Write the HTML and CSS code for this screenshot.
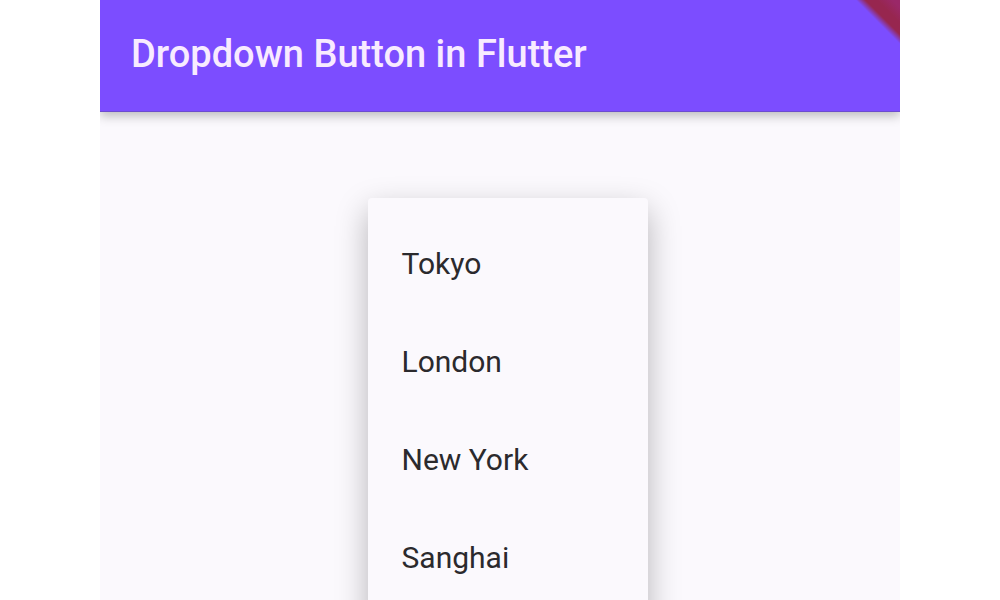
FILE: index.html
```
<!DOCTYPE html>
<html lang="en">
    <head>
        <meta charset="utf-8">
        <title>Dropdown Button in Flutter</title>
        <link rel="stylesheet" href="styles.css">
    </head>
    <body>
        <div class="app">
            <header class="app-bar">
                <h1>Dropdown Button in Flutter</h1>
                <div class="ribbon"></div>
            </header>
            <main class="content">
                <div class="menu" role="menu" aria-label="City">
                    <button type="button" role="menuitem" class="menu-item">Tokyo</button>
                    <button type="button" role="menuitem" class="menu-item">London</button>
                    <button type="button" role="menuitem" class="menu-item">New York</button>
                    <button type="button" role="menuitem" class="menu-item">Sanghai</button>
                </div>
            </main>
        </div>
    </body>
</html>
```

FILE: styles.css
```
:root {
    --primary: #7c4dff;
    --surface: #fbf9fd;
    --text: #2b2a2d;
}

*, *::before, *::after {
    box-sizing: border-box;
}

body {
    margin: 0;
    background-color: #fff;
    font-family: Roboto, "Liberation Sans", sans-serif;
}

.app {
    display: flex;
    flex-direction: column;
    width: 80%;
    height: 100vh;
    margin: 0 auto;
    overflow: hidden;
    background-color: var(--surface);
}

.app-bar {
    position: relative;
    display: flex;
    align-items: center;
    flex-shrink: 0;
    padding: 30px 31px 33px;
    border-bottom: 1px solid #6c4ccf;
    background-color: var(--primary);
    box-shadow: 0 4px 10px rgba(0, 0, 0, 0.25);
}

.app-bar h1 {
    margin: 0;
    color: #f8ebff;
    font-size: 38px;
    font-weight: 500;
    line-height: 48px;
}

/* corner banner, only its lower edge shows */
.ribbon {
    position: absolute;
    top: 0;
    right: 0;
    width: 48px;
    height: 48px;
    background-image: linear-gradient(45deg, transparent 54%, #97264f 64%, #97264f 76%, #9a2868 92%);
}

.content {
    display: flex;
    justify-content: center;
    flex: 1;
    padding: 86px 0 0 15px;
}

.menu {
    display: flex;
    flex-direction: column;
    width: 280px;
    padding: 17px 0;
    border-radius: 4px;
    background-color: var(--surface);
    box-shadow: 0 12px 32px rgba(0, 0, 0, 0.28);
}

.menu-item {
    flex-shrink: 0;
    height: 98px;
    padding: 0 34px;
    border: 0;
    background: none;
    color: var(--text);
    font: 400 30px/40px Roboto, "Liberation Sans", sans-serif;
    text-align: left;
    cursor: pointer;
}
```
